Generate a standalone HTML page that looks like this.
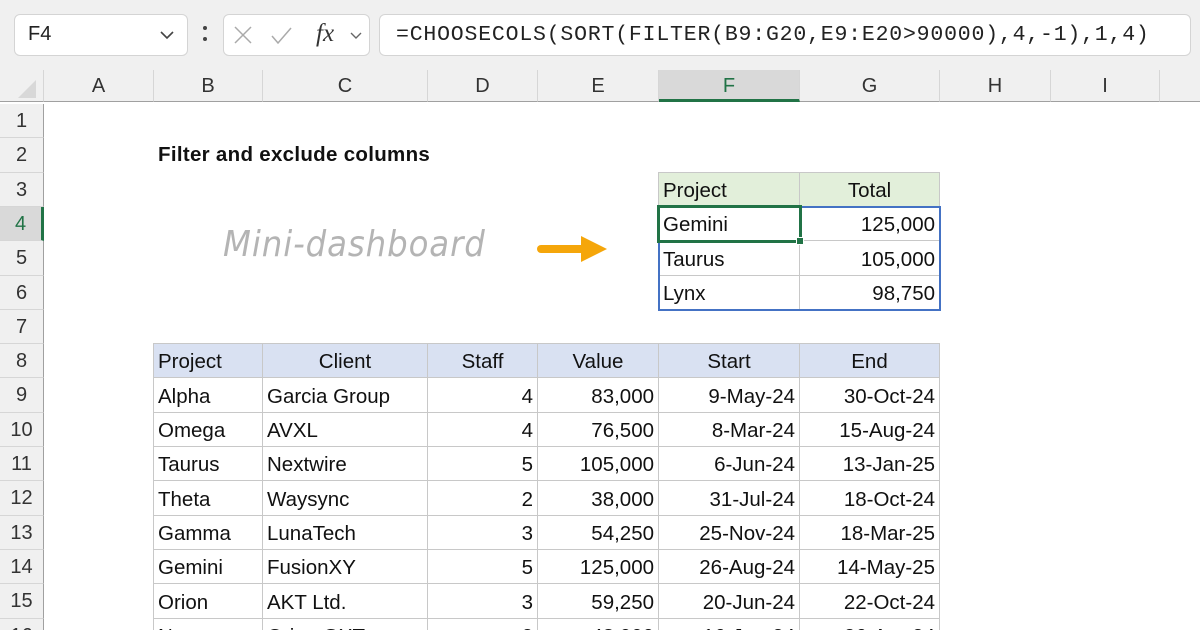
<!DOCTYPE html><html><head><style>
html,body{margin:0;width:1200px;height:630px;overflow:hidden}
body{background:#fff;font-family:"Liberation Sans",sans-serif;position:relative}
.a{position:absolute;box-sizing:border-box}
.top{left:0;top:0;width:1200px;height:102px;background:#f0f0f0}
.box{background:#fff;border:1px solid #d4d4d4;border-radius:6px;top:14px;height:42px}
.ch{top:70px;height:32px;font-size:20px;color:#333;text-align:center;line-height:32px;border-right:1px solid #d6d6d6;border-bottom:1px solid #a0a0a0}
.rh{left:0;width:44px;background:#f0f0f0;border-right:1px solid #a0a0a0;border-bottom:1px solid #d6d6d6;font-size:20px;color:#333;text-align:center}
.c{font-size:20.5px;color:#111;border:1px solid #c8c8c8;margin:-1px 0 0 -1px;padding:0 4px;white-space:nowrap;overflow:hidden}
.r{text-align:right}
.h{background:#d9e1f2}
.g{background:#e2efda}
.ctr{text-align:center}
</style></head><body>
<div class="a top"></div>
<div class="a box" style="left:14px;width:174px"><span class="a" style="left:13px;top:8px;font-size:20px;color:#222">F4</span>
<svg class="a" style="left:144px;top:14px" width="16" height="12"><path d="M2 3l6 6 6-6" stroke="#444" stroke-width="1.6" fill="none"/></svg></div>
<div class="a" style="left:203px;top:26px;width:4px;height:4px;background:#444;border-radius:2px"></div>
<div class="a" style="left:203px;top:37px;width:4px;height:4px;background:#444;border-radius:2px"></div>
<div class="a box" style="left:223px;width:147px">
<svg class="a" style="left:8px;top:10px" width="110" height="22"><path d="M3 2l16 16M19 2L3 18" stroke="#aaa" stroke-width="1.5"/><path d="M40 11l6 7 13-15" stroke="#aaa" stroke-width="1.5" fill="none"/></svg>
<span class="a" style="left:92px;top:5px;font-family:'Liberation Serif',serif;font-style:italic;font-size:25px;color:#333">fx</span>
<svg class="a" style="left:125px;top:16px" width="14" height="10"><path d="M2 2l5 5 5-5" stroke="#666" stroke-width="1.4" fill="none"/></svg></div>
<div class="a box" style="left:379px;width:812px"><span class="a" style="left:16px;top:8px;font-family:'Liberation Mono',monospace;font-size:21.5px;letter-spacing:0.8px;color:#222">=CHOOSECOLS(SORT(FILTER(B9:G20,E9:E20&gt;90000),4,-1),1,4)</span></div>
<div class="a" style="left:0;top:70px;width:44px;height:32px;border-right:1px solid #d6d6d6;border-bottom:1px solid #a0a0a0"><svg width="44" height="32"><path d="M36 10v18H18z" fill="#d8d8d8"/></svg></div>
<div class="a ch" style="left:44px;width:110px">A</div>
<div class="a ch" style="left:154px;width:109px">B</div>
<div class="a ch" style="left:263px;width:165px">C</div>
<div class="a ch" style="left:428px;width:110px">D</div>
<div class="a ch" style="left:538px;width:121px">E</div>
<div class="a ch" style="left:659px;width:141px;background:#d9d9d9;color:#217346;border-bottom:3px solid #217346">F</div>
<div class="a ch" style="left:800px;width:140px">G</div>
<div class="a ch" style="left:940px;width:111px">H</div>
<div class="a ch" style="left:1051px;width:109px">I</div>
<div class="a ch" style="left:1160px;width:40px;border-right:none"></div>
<div id="rows"></div>
<span class="a" style="left:158px;top:143px;font-size:20.5px;font-weight:bold;color:#111;letter-spacing:0.3px">Filter and exclude columns</span>
<span class="a" style="left:223px;top:224px;font-size:36px;color:#b4b4b4;font-style:italic;font-family:'DejaVu Sans',sans-serif;letter-spacing:1px;transform:scaleX(0.9);transform-origin:left">Mini-dashboard</span>
<svg class="a" style="left:537px;top:233px" width="74" height="32"><path d="M4 16h44" stroke="#f5a60a" stroke-width="8" stroke-linecap="round"/><path d="M44 3l26 13-26 13z" fill="#f5a60a"/></svg>
<script>
var cols=[154,263,428,538,659,800,940];
function Y(i){return Math.round(104+34.3*(i-1));}
var h='';
for(var i=1;i<=16;i++){var y=Y(i),hh=Y(i+1)-y;h+='<div class="a rh" style="top:'+y+'px;height:'+hh+'px;line-height:'+hh+'px;'+(i==4?'background:#d9d9d9;color:#217346;border-right:3px solid #217346':'')+'">'+i+'</div>';}
function cell(x1,x2,r,t,cls){var y=Y(r),hh=Y(r+1)-y;return '<div class="a c '+cls+'" style="left:'+x1+'px;top:'+y+'px;width:'+(x2-x1+1)+'px;height:'+(hh+1)+'px;line-height:'+(hh+2)+'px">'+t+'</div>';}
var d=[["Project","Client","Staff","Value","Start","End"],["Alpha","Garcia Group","4","83,000","9-May-24","30-Oct-24"],["Omega","AVXL","4","76,500","8-Mar-24","15-Aug-24"],["Taurus","Nextwire","5","105,000","6-Jun-24","13-Jan-25"],["Theta","Waysync","2","38,000","31-Jul-24","18-Oct-24"],["Gamma","LunaTech","3","54,250","25-Nov-24","18-Mar-25"],["Gemini","FusionXY","5","125,000","26-Aug-24","14-May-25"],["Orion","AKT Ltd.","3","59,250","20-Jun-24","22-Oct-24"],["Nexus","Orion GXT","2","48,000","16-Jan-24","26-Apr-24"]];
for(var r=0;r<d.length;r++)for(var c=0;c<6;c++)h+=cell(cols[c],cols[c+1],8+r,d[r][c],r==0?('h'+(c==0?'':' ctr')):(c<2?'':'r'));
var m=[["Project","Total"],["Gemini","125,000"],["Taurus","105,000"],["Lynx","98,750"]];
for(var r=0;r<4;r++)for(var c=0;c<2;c++)h+=cell(cols[4+c],cols[5+c],3+r,m[r][c],r==0?('g'+(c==0?'':' ctr')):(c==0?'':'r'));
h+='<div class="a" style="left:658px;top:'+(Y(4)-1)+'px;width:283px;height:'+(Y(7)-Y(4)+2)+'px;border:2px solid #4472c4"></div>';
h+='<div class="a" style="left:657px;top:'+(Y(4)-2)+'px;width:145px;height:'+(Y(5)-Y(4)+4)+'px;border:3px solid #217346"></div>';
h+='<div class="a" style="left:796px;top:'+(Y(5)-4)+'px;width:8px;height:8px;background:#217346;border:1px solid #fff"></div>';
document.getElementById('rows').innerHTML=h;
</script>
</body></html>
